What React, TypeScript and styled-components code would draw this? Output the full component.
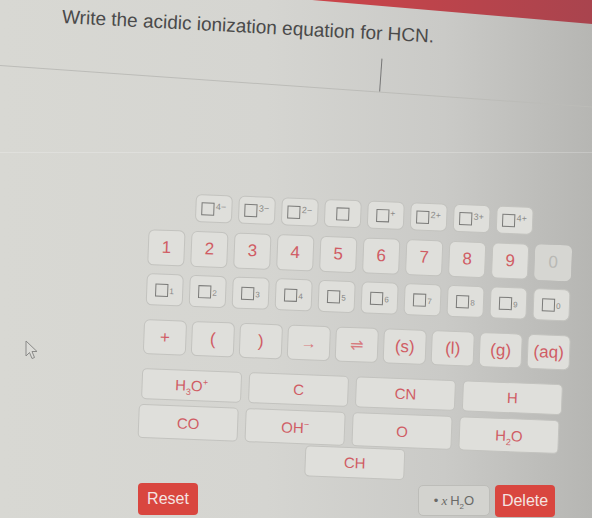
import React from "react";
import styled, { createGlobalStyle } from "styled-components";

const GlobalStyle = createGlobalStyle`
    html, body {
        margin: 0;
        padding: 0;
    }
    body {
        font-family: "Liberation Sans", Arial, sans-serif;
    }
`;

const PageSC = styled.div`
    position: relative;
    width: 592px;
    height: 518px;
    overflow: hidden;
    display: flex;
    flex-direction: column;
    background: linear-gradient(90deg, #d8d8d3 0%, #d5d5d1 45%, #cacac7 75%, #b6b6b3 100%);
`;
const RedBandSC = styled.div`
    position: absolute;
    top: 0;
    left: 312px;
    width: 280px;
    height: 24px;
    background: linear-gradient(90deg, #cc4449, #a9444e);
    clip-path: polygon(0 0, 100% 0, 100% 100%);
`;
const TitleSC = styled.div`
    padding: 6px 0 0 63px;
    height: 19px;
    font-size: 19px;
    color: #4a4a4a;
    transform: rotate(3deg);
    transform-origin: 63px 0;
    white-space: nowrap;
`;
const AnswerSC = styled.div`
    display: flex;
    height: 40px;
    border-bottom: 1px solid #bcbcb8;
    transform: rotate(4deg);
    transform-origin: 0 100%;
    width: 620px;
`;
const CaretSC = styled.div`
    align-self: flex-end;
    margin-left: 380px;
    width: 1px;
    height: 33px;
    background: #777;
`;
const PanelSC = styled.div`
    margin-top: 86px;
    padding-top: 39px;
    border-top: 1px solid rgba(255, 255, 255, 0.22);
    flex: 1;
    display: flex;
    flex-direction: column;
`;
const KeypadSC = styled.div`
    margin-left: 145px;
    display: flex;
    flex-direction: column;
    transform: rotate(2.2deg);
    transform-origin: 0 0;
`;
const RowSC = styled.div<{ $top: number; $indent: number; $gap: number }>`
    display: flex;
    gap: ${(p) => p.$gap}px;
    margin-top: ${(p) => p.$top}px;
    margin-left: ${(p) => p.$indent}px;
`;
const KeySC = styled.div<{ $w: number; $h: number; $muted?: boolean }>`
    width: ${(p) => p.$w}px;
    height: ${(p) => p.$h}px;
    box-sizing: border-box;
    display: flex;
    align-items: center;
    justify-content: center;
    border-radius: 6px;
    border: 1px solid ${(p) => (p.$muted ? "transparent" : "#c3c3bf")};
    background: ${(p) => (p.$muted ? "#d6d6d2" : "#dfdfdb")};
    color: ${(p) => (p.$muted ? "#b9b9b5" : "#d05c64")};
    font-size: 17px;
    white-space: nowrap;
`;
const WideKeySC = styled(KeySC)`
    font-size: 15px;
    border-radius: 5px;
`;
const FormulaSC = styled.span`
    sub,
    sup {
        font-size: 9px;
        line-height: 0;
    }
`;
const BoxSC = styled.span`
    display: inline-block;
    width: 11px;
    height: 11px;
    border: 1px solid #7a7a78;
`;
const SupSC = styled.span`
    font-size: 9px;
    color: #8a8a88;
    align-self: flex-start;
    margin-top: 6px;
    margin-left: 1px;
`;
const SubSC = styled.span`
    font-size: 8px;
    color: #8a8a88;
    align-self: flex-end;
    margin-bottom: 9px;
    margin-left: 1px;
`;
const ArrowSC = styled.span`
    font-size: 16px;
    color: #d77a7e;
`;
const BottomSC = styled.div`
    margin-top: 13px;
    padding: 0 37px 0 138px;
    display: flex;
    justify-content: space-between;
    align-items: flex-start;
`;
const RightGroupSC = styled.div`
    display: flex;
    gap: 5px;
    align-items: flex-start;
    margin-top: 2px;
`;
const RedButtonSC = styled.button<{ $w: number }>`
    width: ${(p) => p.$w}px;
    height: 32px;
    padding: 0;
    border: none;
    border-radius: 4px;
    background: #d9463f;
    color: #f4e4e2;
    font-family: "Liberation Sans", Arial, sans-serif;
    font-size: 16px;
`;
const WaterButtonSC = styled.button`
    width: 72px;
    height: 31px;
    padding: 0;
    border: 1px solid #bdbdb9;
    border-radius: 5px;
    background: #d3d3cf;
    color: #6a6a68;
    font-family: "Liberation Sans", Arial, sans-serif;
    font-size: 13px;
    i {
        font-family: "Liberation Serif", serif;
        margin: 0 3px;
    }
    sub {
        font-size: 8px;
        line-height: 0;
    }
`;
const PointerSC = styled.svg`
    position: absolute;
    left: 25px;
    top: 340px;
`;

const sups = ["4−", "3−", "2−", "", "+", "2+", "3+", "4+"];
const digits = ["1", "2", "3", "4", "5", "6", "7", "8", "9"];
const subs = ["1", "2", "3", "4", "5", "6", "7", "8", "9", "0"];

export default function App() {
    return (
        <PageSC>
            <GlobalStyle />
            <RedBandSC />
            <TitleSC>Write the acidic ionization equation for HCN.</TitleSC>
            <AnswerSC>
                <CaretSC />
            </AnswerSC>
            <PanelSC>
                <KeypadSC>
                    <RowSC $top={0} $indent={51} $gap={6}>
                        {sups.map((s, i) => (
                            <KeySC key={i} $w={37} $h={28}>
                                <BoxSC />
                                <SupSC>{s}</SupSC>
                            </KeySC>
                        ))}
                    </RowSC>
                    <RowSC $top={9} $indent={5} $gap={6}>
                        {digits.map((d) => (
                            <KeySC key={d} $w={37} $h={36}>
                                {d}
                            </KeySC>
                        ))}
                        <KeySC $w={37} $h={36} $muted>
                            0
                        </KeySC>
                    </RowSC>
                    <RowSC $top={8} $indent={5} $gap={6}>
                        {subs.map((s) => (
                            <KeySC key={s} $w={37} $h={32}>
                                <BoxSC />
                                <SubSC>{s}</SubSC>
                            </KeySC>
                        ))}
                    </RowSC>
                    <RowSC $top={14} $indent={4} $gap={5}>
                        <KeySC $w={43} $h={35}>+</KeySC>
                        <KeySC $w={43} $h={35}>(</KeySC>
                        <KeySC $w={43} $h={35}>)</KeySC>
                        <KeySC $w={43} $h={35}>
                            <ArrowSC>→</ArrowSC>
                        </KeySC>
                        <KeySC $w={43} $h={35}>
                            <ArrowSC>⇌</ArrowSC>
                        </KeySC>
                        <KeySC $w={43} $h={35}>(s)</KeySC>
                        <KeySC $w={43} $h={35}>(l)</KeySC>
                        <KeySC $w={43} $h={35}>(g)</KeySC>
                        <KeySC $w={43} $h={35}>(aq)</KeySC>
                    </RowSC>
                    <RowSC $top={14} $indent={4} $gap={7}>
                        <WideKeySC $w={100} $h={31}>
                            <FormulaSC>
                                H<sub>3</sub>O<sup>+</sup>
                            </FormulaSC>
                        </WideKeySC>
                        <WideKeySC $w={100} $h={31}>C</WideKeySC>
                        <WideKeySC $w={100} $h={31}>CN</WideKeySC>
                        <WideKeySC $w={100} $h={31}>H</WideKeySC>
                    </RowSC>
                    <RowSC $top={5} $indent={2} $gap={7}>
                        <WideKeySC $w={100} $h={34}>CO</WideKeySC>
                        <WideKeySC $w={100} $h={34}>
                            <FormulaSC>
                                OH<sup>−</sup>
                            </FormulaSC>
                        </WideKeySC>
                        <WideKeySC $w={100} $h={34}>O</WideKeySC>
                        <WideKeySC $w={100} $h={34}>
                            <FormulaSC>
                                H<sub>2</sub>O
                            </FormulaSC>
                        </WideKeySC>
                    </RowSC>
                    <RowSC $top={1} $indent={170} $gap={0}>
                        <WideKeySC $w={100} $h={31}>CH</WideKeySC>
                    </RowSC>
                </KeypadSC>
                <BottomSC>
                    <RedButtonSC $w={60}>Reset</RedButtonSC>
                    <RightGroupSC>
                        <WaterButtonSC>
                            •<i>x</i>H<sub>2</sub>O
                        </WaterButtonSC>
                        <RedButtonSC $w={60}>Delete</RedButtonSC>
                    </RightGroupSC>
                </BottomSC>
            </PanelSC>
            <PointerSC width="14" height="20" viewBox="0 0 14 20">
                <path d="M1 1 L1 16 L4.5 12.5 L7 18.5 L9.5 17.5 L7 11.5 L12 11.5 Z" fill="#dcdcd8" stroke="#8a8a88" strokeWidth="1" />
            </PointerSC>
        </PageSC>
    );
}
